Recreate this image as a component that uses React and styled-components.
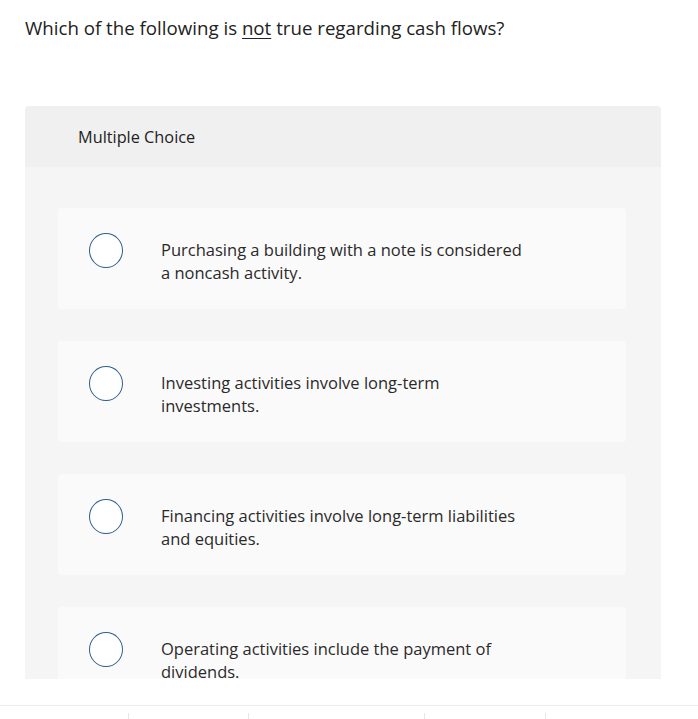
import React from 'react'
import styled, { createGlobalStyle } from 'styled-components'

const GlobalStyle = createGlobalStyle`
  html, body {
    margin: 0;
    padding: 0;
    background: #ffffff;
  }
  body {
    font-family: "Open Sans", "Liberation Sans", Arial, sans-serif;
    color: #222;
  }
`

const Page = styled.div`
  width: 698px;
  height: 719px;
  overflow: hidden;
  display: flex;
  flex-direction: column;
`

const Viewport = styled.div`
  height: 679px;
  overflow: hidden;
  padding: 0 37px 0 25px;
  flex-shrink: 0;
`

const Question = styled.p`
  margin: 0;
  padding-top: 16px;
  font-size: 18.7px;
  line-height: 24px;
  color: #222;

  u {
    text-decoration-thickness: 1px;
    text-underline-offset: 3px;
  }
`

const Panel = styled.section`
  margin-top: 66px;
  background: #f5f5f5;
  border-radius: 4px 4px 0 0;
`

const PanelHeader = styled.div`
  height: 61px;
  display: flex;
  align-items: center;
  padding-left: 53px;
  background: #f0f0f0;
  border-radius: 4px 4px 0 0;
  font-size: 16.3px;
  color: #222;
`

const OptionList = styled.ul`
  list-style: none;
  margin: 0;
  padding: 41px 35px 41px 33px;
  display: flex;
  flex-direction: column;
  gap: 32px;
`

const OptionCard = styled.li`
  display: flex;
  align-items: flex-start;
  background: #fafafa;
  border-radius: 4px;
  padding: 25px 0 25px 31px;
`

const Radio = styled.span`
  flex-shrink: 0;
  width: 32px;
  height: 33px;
  border: 1.5px solid #2d5d8c;
  border-radius: 50%;
  background: #ffffff;
`

const OptionText = styled.div`
  margin-left: 38px;
  padding-top: 5px;
  font-size: 16.5px;
  line-height: 23px;
  color: #2a2a2a;

  span {
    display: block;
    white-space: nowrap;
  }
`

const Footer = styled.div`
  margin-top: 26px;
  border-top: 1px solid #ececec;
  padding-top: 7px;
  display: grid;
  grid-template-columns: 128px 120px 176px 121px 1fr;
  height: 6px;
`

const FooterCell = styled.div`
  border-left: ${({ $first }) => ($first ? 'none' : '1px solid #e6e6e6')};
`

const options = [
  ['Purchasing a building with a note is considered', 'a noncash activity.'],
  ['Investing activities involve long-term', 'investments.'],
  ['Financing activities involve long-term liabilities', 'and equities.'],
  ['Operating activities include the payment of', 'dividends.'],
]

export default function App() {
  return (
    <Page>
      <GlobalStyle />
      <Viewport>
        <Question>
          Which of the following is <u>not</u> true regarding cash flows?
        </Question>
        <Panel>
          <PanelHeader>Multiple Choice</PanelHeader>
          <OptionList>
            {options.map((lines, i) => (
              <OptionCard key={i}>
                <Radio />
                <OptionText>
                  {lines.map((l, j) => (
                    <span key={j}>{l}</span>
                  ))}
                </OptionText>
              </OptionCard>
            ))}
          </OptionList>
        </Panel>
      </Viewport>
      <Footer>
        {[0, 1, 2, 3, 4].map((i) => (
          <FooterCell key={i} $first={i === 0} />
        ))}
      </Footer>
    </Page>
  )
}
